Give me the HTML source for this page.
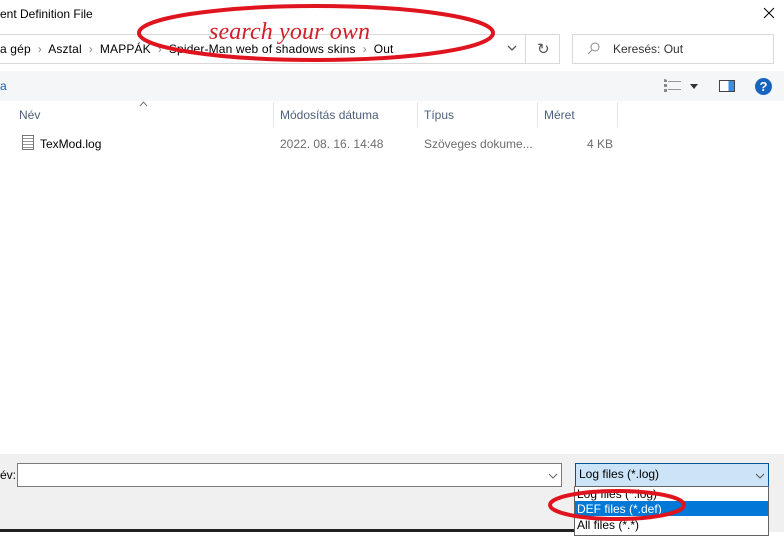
<!DOCTYPE html>
<html><head><meta charset="utf-8"><style>
*{margin:0;padding:0;box-sizing:border-box}
body{width:784px;height:532px;overflow:hidden;background:#fff;font-family:"Liberation Sans",sans-serif;font-size:12px;color:#000;position:relative}
.a{position:absolute;white-space:nowrap}
</style></head><body>
<div class="a" style="left:0;top:7px;font-size:12px">ent Definition File</div>
<svg class="a" style="left:763px;top:7px" width="12" height="12"><path d="M1 1L11 11M11 1L1 11" stroke="#000" stroke-width="1"/></svg>
<div class="a" style="left:-2px;top:34px;width:528px;height:30px;border:1px solid #d9d9d9"></div>
<div class="a" style="left:525px;top:34px;width:35px;height:30px;border:1px solid #d9d9d9"></div>
<div class="a" style="left:0;top:42px;color:#000;letter-spacing:0.15px">a gép <span style="color:#888">&nbsp;›&nbsp;</span> Asztal <span style="color:#888">&nbsp;›&nbsp;</span> MAPPÁK <span style="color:#888">&nbsp;›&nbsp;</span> Spider-Man web of shadows skins <span style="color:#888">&nbsp;›&nbsp;</span> Out</div>
<svg class="a" style="left:507px;top:45px" width="10" height="6"><path d="M1 1L5 5L9 1" stroke="#555" fill="none" stroke-width="1.3"/></svg>
<div class="a" style="left:537px;top:40px;color:#555;font-size:15px">↻</div>
<div class="a" style="left:572px;top:34px;width:202px;height:30px;border:1px solid #d9d9d9"></div>
<svg class="a" style="left:587px;top:42px" width="13" height="13"><circle cx="8" cy="5" r="4" stroke="#888" fill="none"/><path d="M5 8L1 12" stroke="#888"/></svg>
<div class="a" style="left:613px;top:42px;color:#333">Keresés: Out</div>
<div class="a" style="left:0;top:71px;width:784px;height:30px;background:#f5f6f7"></div>
<div class="a" style="left:0;top:79px;color:#1a5fb4">a</div>
<div class="a" style="left:664px;top:79px;width:16px;height:13px;border-left:3px dotted #888;border-top:1px solid transparent"></div>
<div class="a" style="left:668px;top:81px;width:13px;height:9px;border-top:1px solid #999;border-bottom:1px solid #999"></div>
<div class="a" style="left:690px;top:84px;border:4px solid transparent;border-top:5px solid #333"></div>
<div class="a" style="left:719px;top:80px;width:16px;height:12px;border:1px solid #444;background:linear-gradient(90deg,#fff 60%,#3a8ee6 60%)"></div>
<div class="a" style="left:755px;top:78px;width:17px;height:17px;border-radius:50%;background:#1764c0;color:#fff;font-weight:bold;font-size:13px;text-align:center;line-height:17px">?</div>
<svg class="a" style="left:139px;top:101px" width="9" height="6"><path d="M1 5L4.5 1L8 5" stroke="#777" fill="none"/></svg>
<div class="a" style="left:19px;top:108px;color:#4c607a">Név</div>
<div class="a" style="left:273px;top:102px;width:1px;height:25px;background:#e5e5e5"></div>
<div class="a" style="left:280px;top:108px;color:#4c607a">Módosítás dátuma</div>
<div class="a" style="left:417px;top:102px;width:1px;height:25px;background:#e5e5e5"></div>
<div class="a" style="left:424px;top:108px;color:#4c607a">Típus</div>
<div class="a" style="left:537px;top:102px;width:1px;height:25px;background:#e5e5e5"></div>
<div class="a" style="left:544px;top:108px;color:#4c607a">Méret</div>
<div class="a" style="left:617px;top:102px;width:1px;height:25px;background:#e5e5e5"></div>
<div class="a" style="left:22px;top:135px;width:12px;height:15px;border:1px solid #777;background:repeating-linear-gradient(#fff 0 2px,#999 2px 3px)"></div>
<div class="a" style="left:40px;top:137px">TexMod.log</div>
<div class="a" style="left:280px;top:137px;color:#6d6d6d">2022. 08. 16. 14:48</div>
<div class="a" style="left:424px;top:137px;color:#6d6d6d">Szöveges dokume...</div>
<div class="a" style="left:587px;top:137px;color:#6d6d6d">4 KB</div>
<div class="a" style="left:0;top:454px;width:784px;height:78px;background:#f0f0f0"></div>
<div class="a" style="left:0;top:468px">év:</div>
<div class="a" style="left:17px;top:463px;width:545px;height:24px;background:#fff;border:1px solid #7a7a7a"></div>
<svg class="a" style="left:548px;top:473px" width="10" height="6"><path d="M1 1L5 5L9 1" stroke="#666" fill="none"/></svg>
<div class="a" style="left:575px;top:463px;width:194px;height:24px;background:#cce4f7;border:1px solid #005499"></div>
<div class="a" style="left:579px;top:467px">Log files (*.log)</div>
<svg class="a" style="left:755px;top:473px" width="10" height="6"><path d="M1 1L5 5L9 1" stroke="#555" fill="none"/></svg>
<div class="a" style="left:574px;top:486px;width:195px;height:50px;background:#fff;border:1px solid #646464"></div>
<div class="a" style="left:577px;top:487px">Log files (*.log)</div>
<div class="a" style="left:575px;top:501px;width:193px;height:15px;background:#0078d7"></div>
<div class="a" style="left:577px;top:502px;color:#fff">DEF files (*.def)</div>
<div class="a" style="left:577px;top:518px">All files (*.*)</div>
<div class="a" style="left:0;top:529px;width:574px;height:3px;background:#222"></div>
<svg class="a" style="left:0;top:0" width="784" height="532">
<ellipse cx="316" cy="33" rx="177" ry="27" fill="none" stroke="#e0141e" stroke-width="4"/>
<ellipse cx="617" cy="505" rx="67" ry="14" fill="none" stroke="#e0141e" stroke-width="4"/>
<text x="209" y="39" fill="#d0202a" font-family="Liberation Serif,serif" font-style="italic" font-size="24" textLength="161">search your own</text>
</svg>
</body></html>
